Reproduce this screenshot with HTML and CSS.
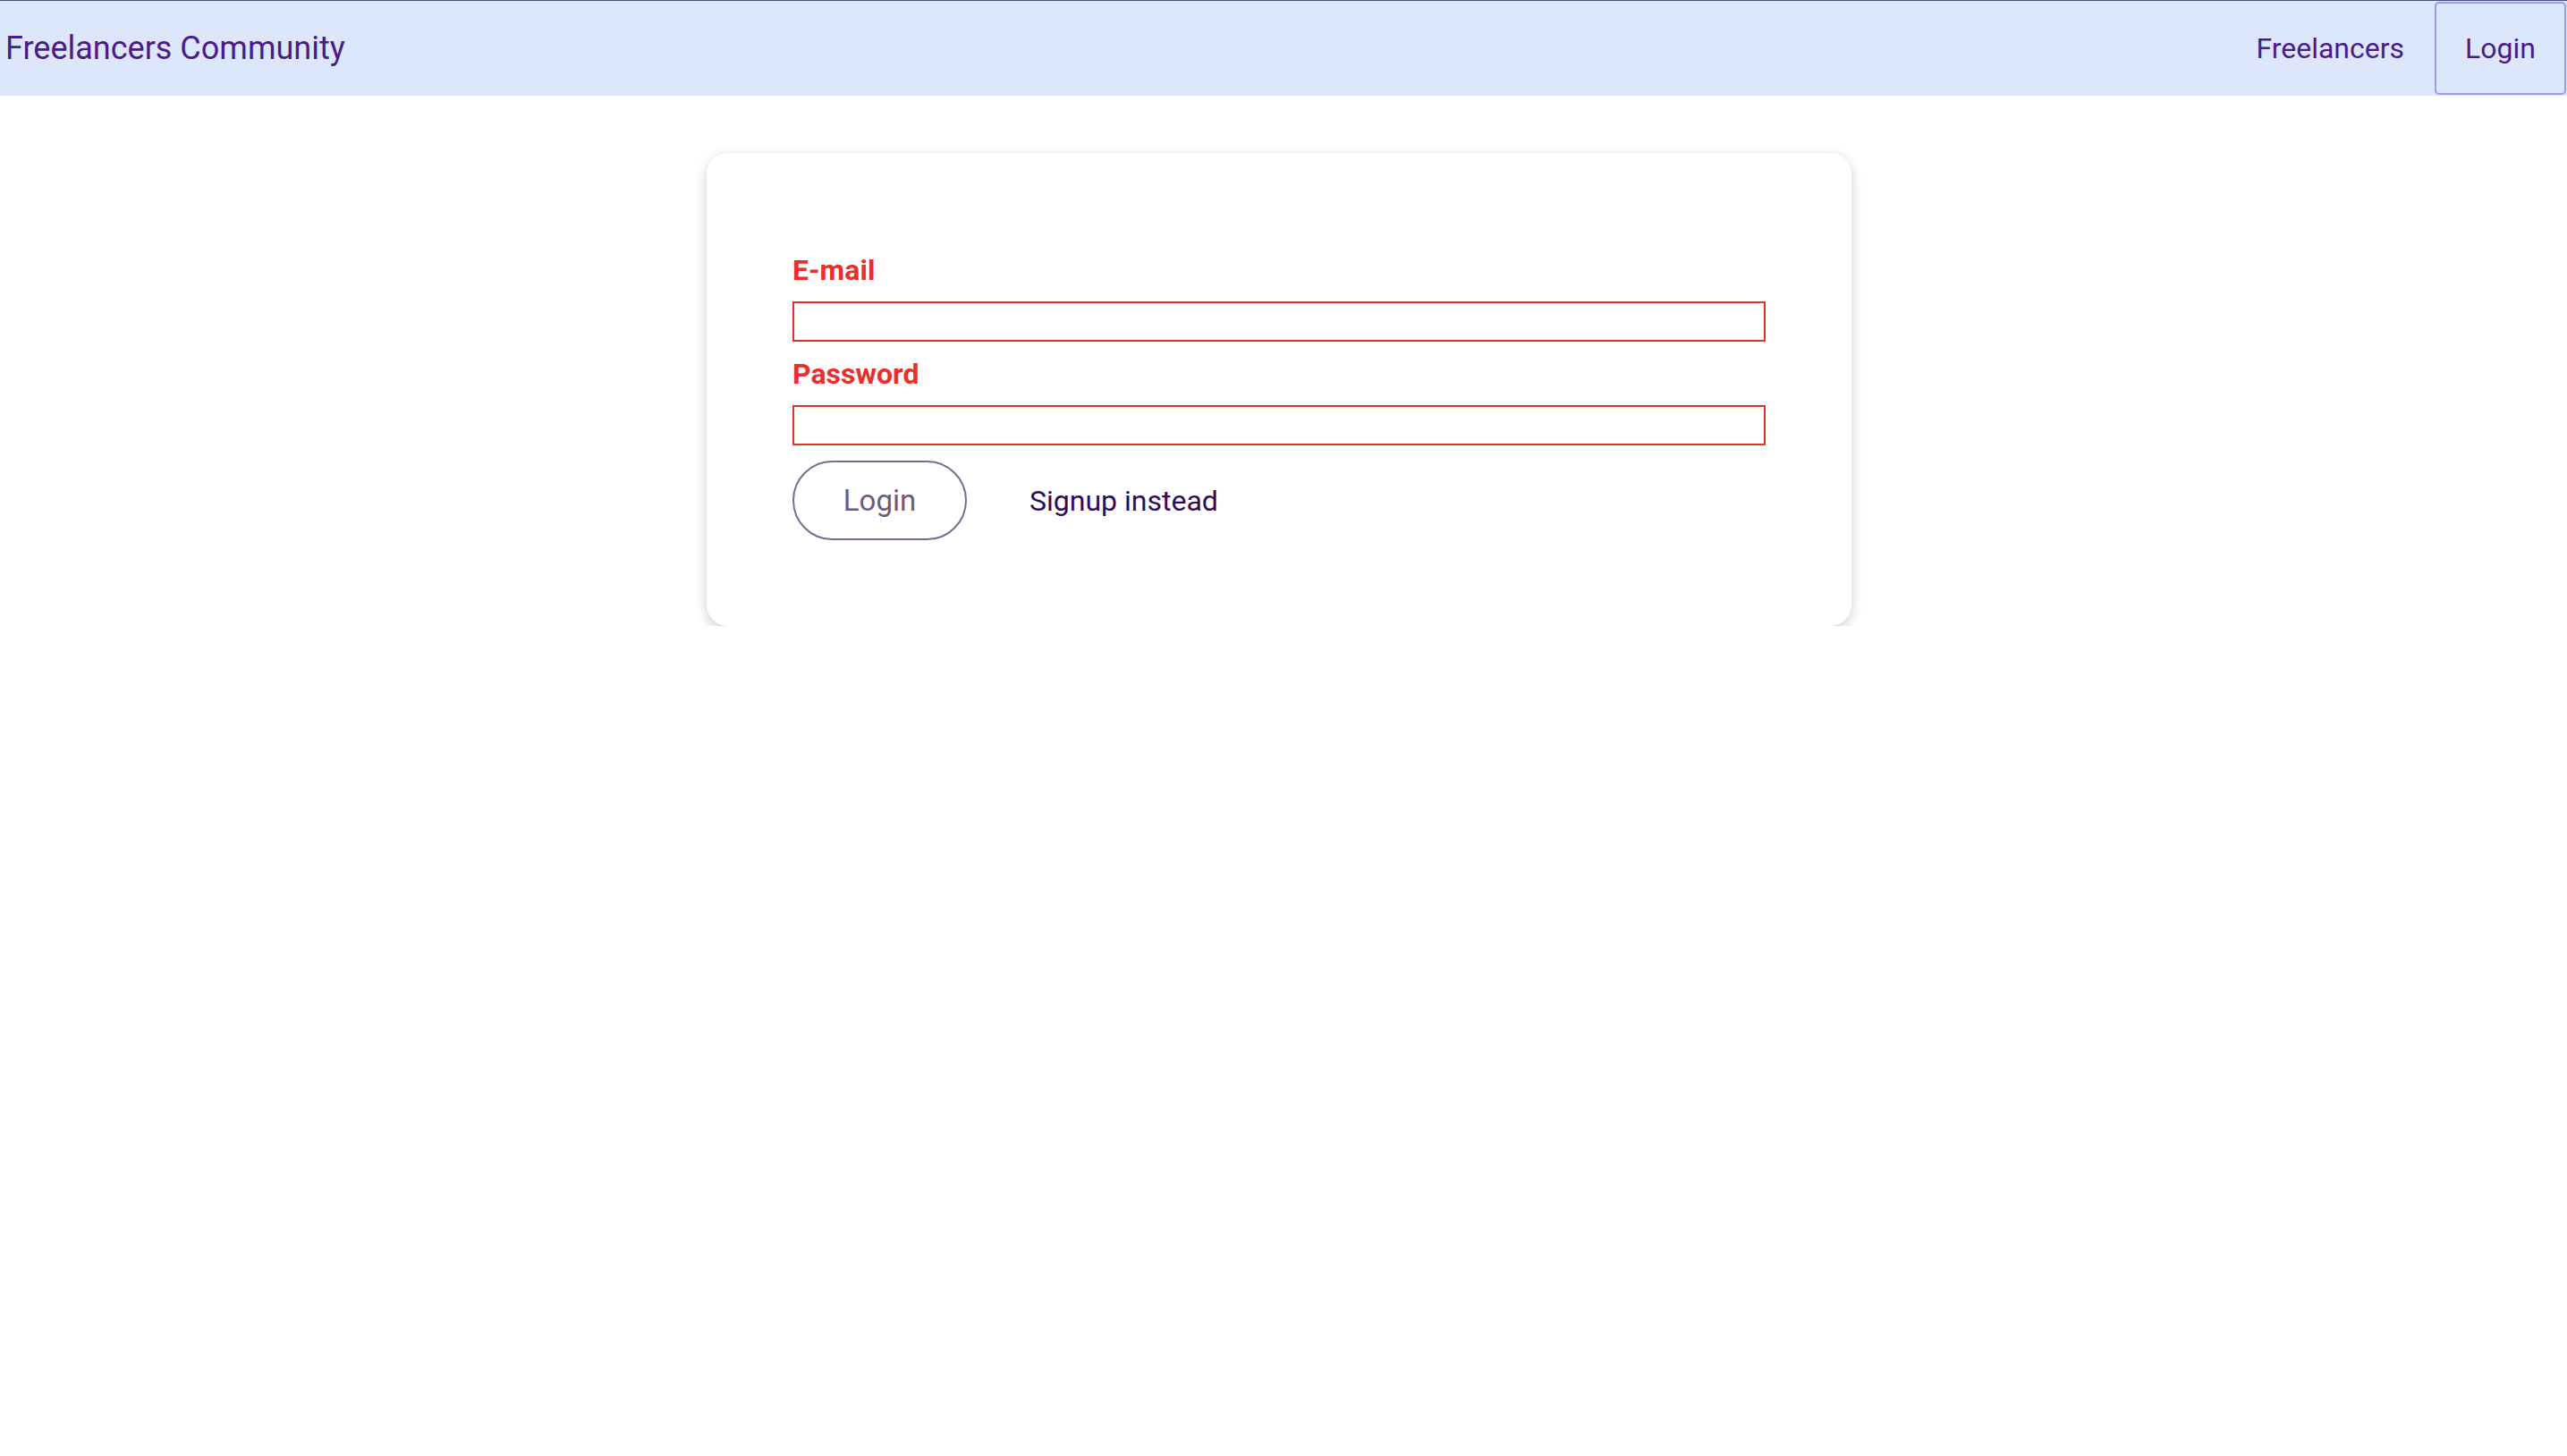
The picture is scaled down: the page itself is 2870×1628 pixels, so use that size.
FILE: index.html
```html
<!DOCTYPE html>
<html lang="en">
<head>
    <meta charset="UTF-8">
    <meta name="viewport" content="width=device-width, initial-scale=1.0">
    <title>Freelancers Community - Login</title>
    <link rel="stylesheet" href="styles.css">
</head>
<body>
    <header class="topbar">
        <a class="brand" href="#">Freelancers Community</a>
        <nav class="nav">
            <a class="nav-link" href="#">Freelancers</a>
            <a class="nav-link active" href="#">Login</a>
        </nav>
    </header>

    <main class="page">
        <section class="card">
            <form class="auth-form">
                <label class="field-label" for="email">E-mail</label>
                <input class="field-input" type="email" id="email">

                <label class="field-label" for="password">Password</label>
                <input class="field-input" type="password" id="password">

                <div class="actions">
                    <button class="btn-outline" type="submit">Login</button>
                    <button class="btn-flat" type="button">Signup instead</button>
                </div>
            </form>
        </section>
    </main>
</body>
</html>
```

FILE: styles.css
```css
body {
    margin: 0;
    font-family: Roboto, "Noto Sans", sans-serif;
    background: #ffffff;
}

.topbar {
    display: flex;
    justify-content: space-between;
    align-items: stretch;
    height: 106px;
    border-top: 1px solid #46527c;
    background: #dde7fc;
}

.brand {
    align-self: center;
    padding-left: 6px;
    margin-top: -1px;
    font-size: 36px;
    color: #4a1c88;
    text-decoration: none;
}

.nav {
    display: flex;
    align-items: stretch;
    padding: 1px 1px 1px 0;
}

.nav-link {
    display: flex;
    align-items: center;
    padding: 0 32px;
    font-size: 32px;
    color: #4a1c88;
    text-decoration: none;
    border: 2px solid transparent;
    border-radius: 5px;
}

.nav-link.active {
    border-color: #9c99f3;
}

.page {
    display: flex;
    justify-content: center;
    padding-right: 10px;
}

.card {
    box-sizing: border-box;
    width: 1280px;
    margin-top: 64px;
    padding: 112px 96px 96px;
    background: #ffffff;
    border-radius: 24px;
    box-shadow: 0 4px 14px rgba(0, 0, 0, 0.2);
}

.auth-form {
    display: flex;
    flex-direction: column;
}

.field-label {
    font-size: 32px;
    line-height: 38px;
    font-weight: 700;
    color: #e8302a;
    margin-bottom: 16px;
}

.field-input {
    box-sizing: border-box;
    width: 100%;
    height: 45px;
    margin: 0 0 17px;
    padding: 0 10px;
    border: 2px solid #e8302a;
    border-radius: 0;
    font-family: inherit;
    font-size: 24px;
    outline: none;
}

.actions {
    display: flex;
    align-items: center;
}

.btn-outline {
    box-sizing: border-box;
    width: 195px;
    height: 89px;
    border: 2px solid #7a6895;
    border-radius: 45px;
    background: #ffffff;
    font-family: inherit;
    font-size: 33px;
    color: #6b5a86;
    cursor: pointer;
}

.btn-flat {
    margin-left: 70px;
    padding: 0;
    border: none;
    background: none;
    font-family: inherit;
    font-size: 32px;
    color: #2e0b5c;
    cursor: pointer;
}
```
